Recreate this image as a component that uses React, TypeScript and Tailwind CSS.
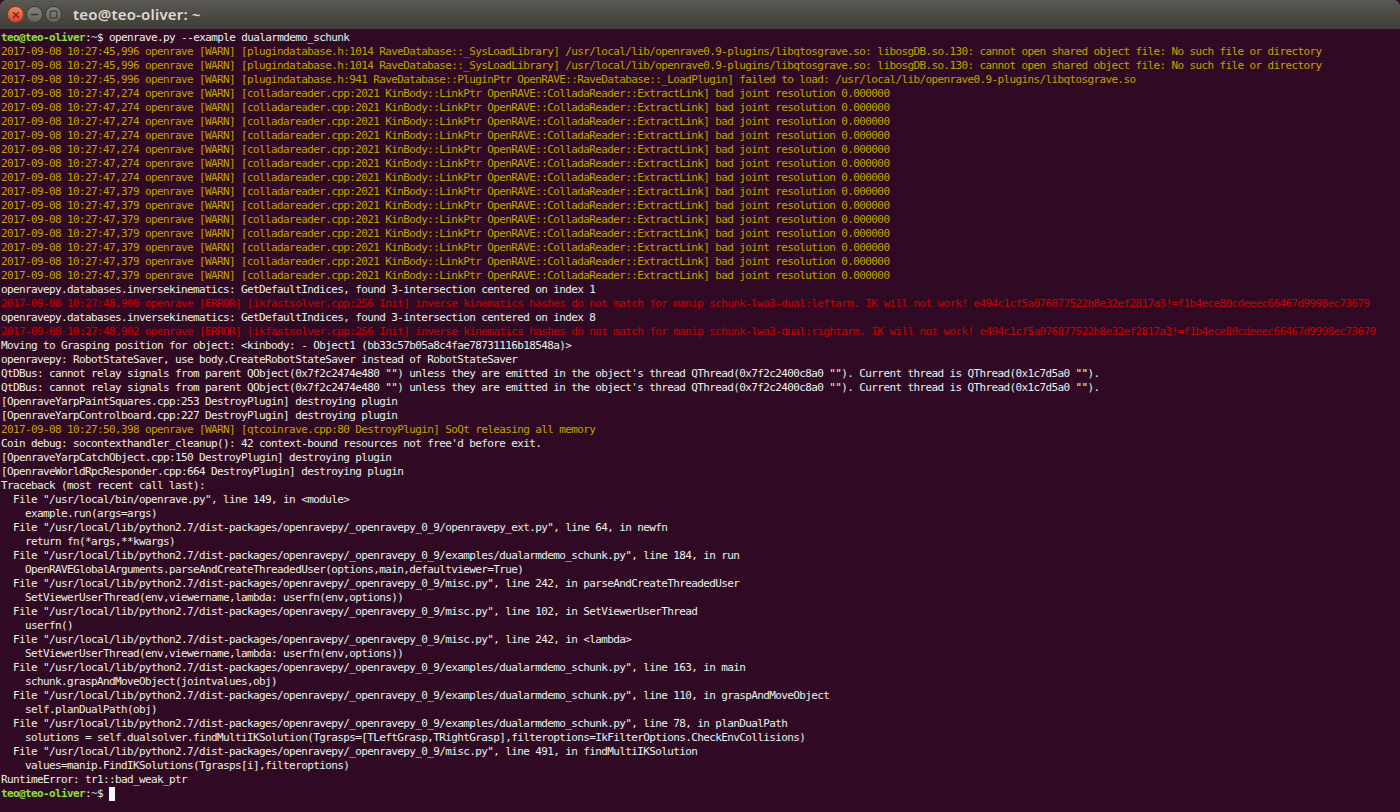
import { X, Minus, Square } from 'lucide-react';

type Kind = 'text' | 'warn' | 'error';

interface Line {
  kind: Kind;
  text: string;
}

const collada = (stamp: string): Line => ({
  kind: 'warn',
  text: `2017-09-08 10:27:47,${stamp} openrave [WARN] [colladareader.cpp:2021 KinBody::LinkPtr OpenRAVE::ColladaReader::ExtractLink] bad joint resolution 0.000000`,
});

const t = (text: string): Line => ({ kind: 'text', text });
const w = (text: string): Line => ({ kind: 'warn', text });
const e = (text: string): Line => ({ kind: 'error', text });

const lines: Line[] = [
  w('2017-09-08 10:27:45,996 openrave [WARN] [plugindatabase.h:1014 RaveDatabase::_SysLoadLibrary] /usr/local/lib/openrave0.9-plugins/libqtosgrave.so: libosgDB.so.130: cannot open shared object file: No such file or directory'),
  w('2017-09-08 10:27:45,996 openrave [WARN] [plugindatabase.h:1014 RaveDatabase::_SysLoadLibrary] /usr/local/lib/openrave0.9-plugins/libqtosgrave.so: libosgDB.so.130: cannot open shared object file: No such file or directory'),
  w('2017-09-08 10:27:45,996 openrave [WARN] [plugindatabase.h:941 RaveDatabase::PluginPtr OpenRAVE::RaveDatabase::_LoadPlugin] failed to load: /usr/local/lib/openrave0.9-plugins/libqtosgrave.so'),
  collada('274'),
  collada('274'),
  collada('274'),
  collada('274'),
  collada('274'),
  collada('274'),
  collada('274'),
  collada('379'),
  collada('379'),
  collada('379'),
  collada('379'),
  collada('379'),
  collada('379'),
  collada('379'),
  t('openravepy.databases.inversekinematics: GetDefaultIndices, found 3-intersection centered on index 1'),
  e('2017-09-08 10:27:48,900 openrave [ERROR] [ikfastsolver.cpp:256 Init] inverse kinematics hashes do not match for manip schunk-lwa3-dual:leftarm. IK will not work! e494c1cf5a076877522b8e32ef2817a3!=f1b4ece80cdeeec66467d9998ec73679'),
  t('openravepy.databases.inversekinematics: GetDefaultIndices, found 3-intersection centered on index 8'),
  e('2017-09-08 10:27:48,902 openrave [ERROR] [ikfastsolver.cpp:256 Init] inverse kinematics hashes do not match for manip schunk-lwa3-dual:rightarm. IK will not work! e494c1cf5a076877522b8e32ef2817a3!=f1b4ece80cdeeec66467d9998ec73679'),
  t('Moving to Grasping position for object: <kinbody: - Object1 (bb33c57b05a8c4fae78731116b18548a)>'),
  t('openravepy: RobotStateSaver, use body.CreateRobotStateSaver instead of RobotStateSaver'),
  t(`QtDBus: cannot relay signals from parent QObject(0x7f2c2474e480 "") unless they are emitted in the object's thread QThread(0x7f2c2400c8a0 ""). Current thread is QThread(0x1c7d5a0 "").`),
  t(`QtDBus: cannot relay signals from parent QObject(0x7f2c2474e480 "") unless they are emitted in the object's thread QThread(0x7f2c2400c8a0 ""). Current thread is QThread(0x1c7d5a0 "").`),
  t('[OpenraveYarpPaintSquares.cpp:253 DestroyPlugin] destroying plugin'),
  t('[OpenraveYarpControlboard.cpp:227 DestroyPlugin] destroying plugin'),
  w('2017-09-08 10:27:50,398 openrave [WARN] [qtcoinrave.cpp:80 DestroyPlugin] SoQt releasing all memory'),
  t(`Coin debug: socontexthandler_cleanup(): 42 context-bound resources not free'd before exit.`),
  t('[OpenraveYarpCatchObject.cpp:150 DestroyPlugin] destroying plugin'),
  t('[OpenraveWorldRpcResponder.cpp:664 DestroyPlugin] destroying plugin'),
  t('Traceback (most recent call last):'),
  t('  File "/usr/local/bin/openrave.py", line 149, in <module>'),
  t('    example.run(args=args)'),
  t('  File "/usr/local/lib/python2.7/dist-packages/openravepy/_openravepy_0_9/openravepy_ext.py", line 64, in newfn'),
  t('    return fn(*args,**kwargs)'),
  t('  File "/usr/local/lib/python2.7/dist-packages/openravepy/_openravepy_0_9/examples/dualarmdemo_schunk.py", line 184, in run'),
  t('    OpenRAVEGlobalArguments.parseAndCreateThreadedUser(options,main,defaultviewer=True)'),
  t('  File "/usr/local/lib/python2.7/dist-packages/openravepy/_openravepy_0_9/misc.py", line 242, in parseAndCreateThreadedUser'),
  t('    SetViewerUserThread(env,viewername,lambda: userfn(env,options))'),
  t('  File "/usr/local/lib/python2.7/dist-packages/openravepy/_openravepy_0_9/misc.py", line 102, in SetViewerUserThread'),
  t('    userfn()'),
  t('  File "/usr/local/lib/python2.7/dist-packages/openravepy/_openravepy_0_9/misc.py", line 242, in <lambda>'),
  t('    SetViewerUserThread(env,viewername,lambda: userfn(env,options))'),
  t('  File "/usr/local/lib/python2.7/dist-packages/openravepy/_openravepy_0_9/examples/dualarmdemo_schunk.py", line 163, in main'),
  t('    schunk.graspAndMoveObject(jointvalues,obj)'),
  t('  File "/usr/local/lib/python2.7/dist-packages/openravepy/_openravepy_0_9/examples/dualarmdemo_schunk.py", line 110, in graspAndMoveObject'),
  t('    self.planDualPath(obj)'),
  t('  File "/usr/local/lib/python2.7/dist-packages/openravepy/_openravepy_0_9/examples/dualarmdemo_schunk.py", line 78, in planDualPath'),
  t('    solutions = self.dualsolver.findMultiIKSolution(Tgrasps=[TLeftGrasp,TRightGrasp],filteroptions=IkFilterOptions.CheckEnvCollisions)'),
  t('  File "/usr/local/lib/python2.7/dist-packages/openravepy/_openravepy_0_9/misc.py", line 491, in findMultiIKSolution'),
  t('    values=manip.FindIKSolutions(Tgrasps[i],filteroptions)'),
  t('RuntimeError: tr1::bad_weak_ptr'),
];

const kindClass: Record<Kind, string> = {
  text: 'text-[#eeeeec]',
  warn: 'text-[#c4a000]',
  error: 'text-[#cc0000]',
};

const Prompt = () => (
  <>
    <span className="font-bold text-[#8ae234]">teo@teo-oliver</span>
    <span className="text-[#eeeeec]">:</span>
    <span className="text-[#b4c8e0]">~</span>
    <span className="text-[#eeeeec]">$ </span>
  </>
);

const TitleBar = () => (
  <div className="h-[29px] shrink-0 flex items-center bg-gradient-to-b from-[#5a5953] to-[#3e3d38] rounded-t-md">
    <div className="flex items-center gap-[2px] pl-[7px]">
      <span className="w-[17px] h-[17px] rounded-full flex items-center justify-center bg-gradient-to-b from-[#f08a5d] to-[#d8431f] border border-[#8a3a20]">
        <X className="w-[10px] h-[10px] text-[#5a2a1c]" strokeWidth={3} />
      </span>
      <span className="w-[17px] h-[17px] rounded-full flex items-center justify-center bg-gradient-to-b from-[#85847d] to-[#63625c] border border-[#3b3a36]">
        <Minus className="w-[11px] h-[11px] text-[#3c3b37]" strokeWidth={3} />
      </span>
      <span className="w-[17px] h-[17px] rounded-full flex items-center justify-center bg-gradient-to-b from-[#85847d] to-[#63625c] border border-[#3b3a36]">
        <Square className="w-[9px] h-[9px] text-[#3c3b37]" strokeWidth={3} />
      </span>
    </div>
    <span className="ml-[11px] font-['Noto_Sans',sans-serif] text-[15px] tracking-[0.2px] font-semibold text-[#dfdbd2]">
      teo@teo-oliver: ~
    </span>
  </div>
);

export default function App() {
  return (
    <div className="w-[1400px] h-[812px] overflow-hidden flex flex-col bg-[#300a24]">
      <TitleBar />
      <div className="flex-1 pt-[2px] pl-[1px] font-['DejaVu_Sans_Mono',monospace] text-[11px] leading-[14px] tracking-[-0.62px] whitespace-pre">
        <div className="h-[14px]">
          <Prompt />
          <span className="text-[#eeeeec]">openrave.py --example dualarmdemo_schunk</span>
        </div>
        {lines.map((line, i) => (
          <div key={i} className={`h-[14px] ${kindClass[line.kind]}`}>
            {line.text}
          </div>
        ))}
        <div className="h-[14px] flex">
          <span>
            <Prompt />
          </span>
          <span className="w-[6px] h-[14px] bg-[#f5f5f3]" />
        </div>
      </div>
    </div>
  );
}
